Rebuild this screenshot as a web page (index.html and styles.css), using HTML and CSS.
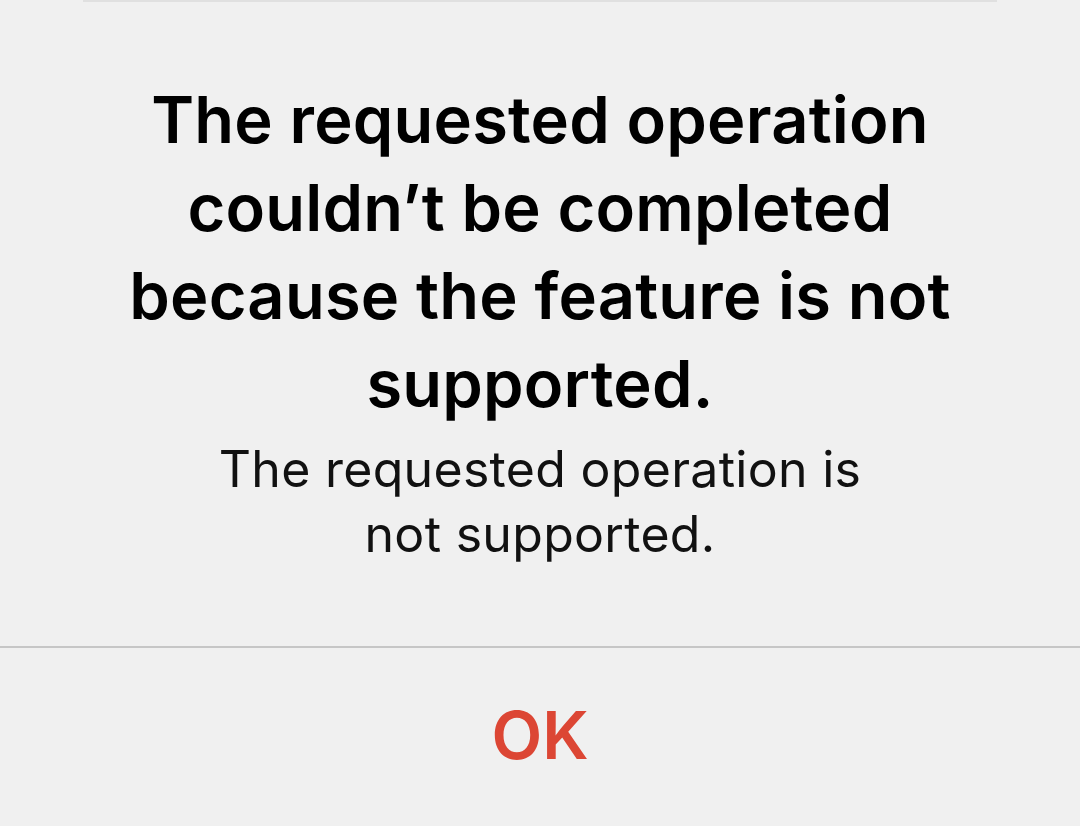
FILE: index.html
```html
<!DOCTYPE html>
<html lang="en">
<head>
  <meta charset="UTF-8" />
  <meta name="viewport" content="width=device-width, initial-scale=1.0" />
  <title>Alert</title>
  <link rel="stylesheet" href="styles.css">
</head>
<body>
  <div class="alert">
    <div class="content">
      <h1 class="title">The requested operation<br>couldn’t be completed<br>because the feature is not<br>supported.</h1>
      <p class="message">The requested operation is<br>not supported.</p>
    </div>
    <button class="action">OK</button>
  </div>
</body>
</html>
```

FILE: styles.css
```css
html, body {
  margin: 0;
  height: 100%;
}
body {
  font-family: Inter, "Noto Sans", sans-serif;
  background: #f0f0f0;
  overflow: hidden;
}
.alert {
  height: 826px;
  display: flex;
  flex-direction: column;
}
.content {
  margin: 0 83px;
  border-top: 2px solid #e0e0e0;
  padding-top: 74px;
  height: 646px;
  box-sizing: border-box;
  text-align: center;
}
.title {
  margin: 0;
  font-size: 65px;
  line-height: 88px;
  font-weight: 600;
  color: #000;
  letter-spacing: 0.2px;
}
.message {
  margin: 9px 0 0;
  font-size: 50px;
  line-height: 65px;
  font-weight: 400;
  color: #111;
  letter-spacing: 0.3px;
}
.action {
  border: 0;
  border-top: 2px solid #c6c6c6;
  background: transparent;
  height: 178px;
  padding: 0 0 2px;
  font-family: inherit;
  font-size: 66px;
  font-weight: 600;
  color: #dc4634;
  cursor: pointer;
}
```
